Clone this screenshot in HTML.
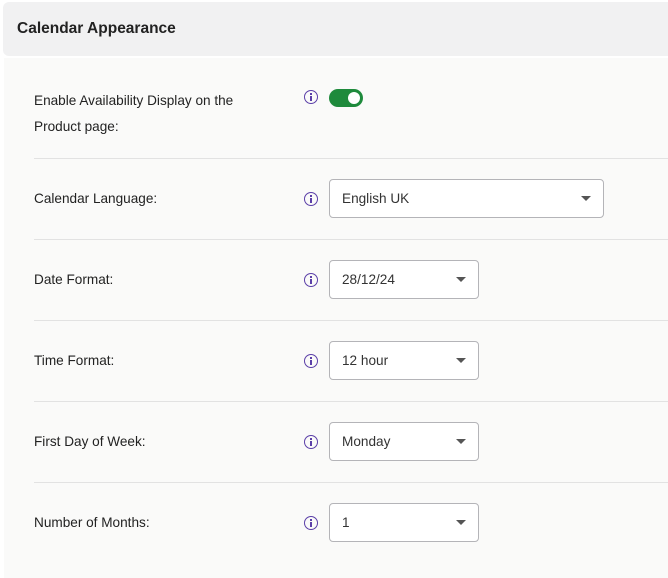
<!DOCTYPE html>
<html><head><style>
body{margin:0;width:668px;height:560px;background:#fff;font-family:"Liberation Sans",sans-serif;position:relative;overflow:hidden;color:#1e1e1e}
.hdr{position:absolute;left:3px;top:2px;width:680px;height:54px;background:#f1f1f2;border-radius:6px}
.hdr span{position:absolute;left:14px;top:18px;font-size:15.5px;font-weight:bold;color:#222}
.body{position:absolute;left:4px;top:58px;width:680px;height:520px;background:#fafaf9}
.lbl{position:absolute;left:34px;font-size:13.6px;color:#222;line-height:26px}
.hr{position:absolute;left:34px;right:0;height:1px;background:#e2e2e2}
.info{position:absolute;left:304px;width:12px;height:12px;border:1.5px solid #5b3fa8;border-radius:50%}
.info:before{content:"";position:absolute;left:5px;top:2px;width:2px;height:2px;background:#5b3fa8}
.info:after{content:"";position:absolute;left:5px;top:5px;width:2px;height:5px;background:#5b3fa8}
.sel{position:absolute;left:329px;height:39px;border:1px solid #b4b4b8;border-radius:4px;background:#fff;box-sizing:border-box;font-size:13.6px;color:#333;padding-left:12px;line-height:37px}
.sel:after{content:"";position:absolute;right:12px;top:16px;border-left:5px solid transparent;border-right:5px solid transparent;border-top:5px solid #555}
</style></head><body>
<div class="hdr"><span>Calendar Appearance</span></div>
<div class="body"></div>
<div class="lbl" style="top:88px">Enable Availability Display on the<br>Product page:</div>
<div class="info" style="top:90px"></div>
<div style="position:absolute;left:329px;top:89px;width:34px;height:18px;border-radius:9px;background:#1e8a3c"><div style="position:absolute;right:3px;top:3px;width:12px;height:12px;border-radius:50%;background:#fff"></div></div>
<div class="hr" style="top:158px"></div>
<div class="lbl" style="top:186px">Calendar Language:</div>
<div class="info" style="top:192px"></div>
<div class="sel" style="top:179px;width:275px">English UK</div>
<div class="hr" style="top:239px"></div>
<div class="lbl" style="top:267px">Date Format:</div>
<div class="info" style="top:273px"></div>
<div class="sel" style="top:260px;width:150px">28/12/24</div>
<div class="hr" style="top:320px"></div>
<div class="lbl" style="top:348px">Time Format:</div>
<div class="info" style="top:354px"></div>
<div class="sel" style="top:341px;width:150px">12 hour</div>
<div class="hr" style="top:401px"></div>
<div class="lbl" style="top:429px">First Day of Week:</div>
<div class="info" style="top:435px"></div>
<div class="sel" style="top:422px;width:150px">Monday</div>
<div class="hr" style="top:482px"></div>
<div class="lbl" style="top:510px">Number of Months:</div>
<div class="info" style="top:516px"></div>
<div class="sel" style="top:503px;width:150px">1</div>
</body></html>
